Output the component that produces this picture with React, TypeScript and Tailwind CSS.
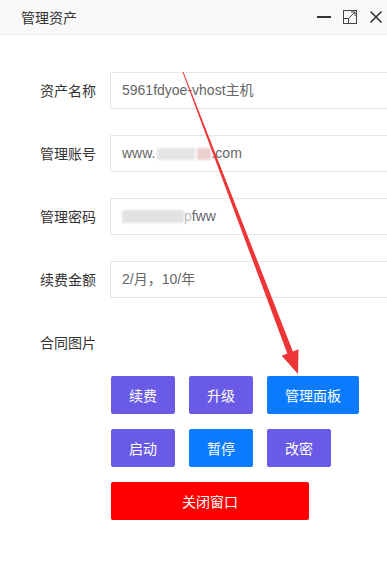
import React from "react"

const font = { fontFamily: '"Noto Sans", "Noto Sans CJK SC", sans-serif' }
const inputFont = { fontFamily: '"Liberation Sans", "Noto Sans CJK SC", sans-serif' }

function Field({ label, children }: { label: string; children: React.ReactNode }) {
  return (
    <div className="flex items-center">
      <div className="w-[110px] shrink-0 pl-[40px] text-[14px] text-[#333]">{label}</div>
      <div
        className="flex h-[37px] w-[290px] shrink-0 items-center border border-[#e6e6e6] bg-white pl-[11px] text-[14px] text-[#666]"
        style={inputFont}
      >
        {children}
      </div>
    </div>
  )
}

function Btn({ label, color, w = "w-[64px]" }: { label: string; color: string; w?: string }) {
  return (
    <button className={`flex h-[38px] ${w} items-center justify-center rounded-[2px] text-[14px] text-white ${color}`}>
      {label}
    </button>
  )
}

export default function App() {
  return (
    <div className="relative h-[583px] w-[387px] overflow-hidden bg-white" style={font}>
      <div className="flex h-[35px] items-center justify-between border-b border-[#eee] bg-[#f8f8f8] pl-[21px] pr-[4px]">
        <span className="text-[14px] text-[#333]">管理资产</span>
        <div className="flex items-center gap-[12px]">
          <svg width="14" height="14" viewBox="0 0 14 14">
            <rect x="0" y="6" width="14" height="2" fill="#333" />
          </svg>
          <svg width="14" height="14" viewBox="0 0 14 14" fill="none" stroke="#444" strokeWidth="1">
            <rect x="0.5" y="0.5" width="13" height="13" />
            <rect x="0.5" y="8.5" width="5" height="5" />
            <path d="M6 8 L12 2 M8 2 H12 V6" />
          </svg>
          <svg width="14" height="14" viewBox="0 0 14 14" fill="none" stroke="#333" strokeWidth="1.6">
            <path d="M1.5 1.5 L12.5 12.5 M12.5 1.5 L1.5 12.5" />
          </svg>
        </div>
      </div>

      <div className="mt-[37px] flex flex-col gap-[26px]">
        <Field label="资产名称">5961fdyoe-vhost主机</Field>
        <Field label="管理账号">
          <span>www.</span>
          <span className="mx-[2px] h-[12px] w-[38px] bg-[#e4e4e4] blur-[1px]" />
          <span className="h-[12px] w-[14px] bg-[#ecd0d0] blur-[1px]" />
          <span>.com</span>
        </Field>
        <Field label="管理密码">
          <span className="h-[13px] w-[62px] bg-[#e2e2e2] blur-[1px]" />
          <span className="text-[#bbb]">p</span>
          <span>fww</span>
        </Field>
        <Field label="续费金额">2/月，10/年</Field>
      </div>

      <div className="mt-[34px] pl-[40px] text-[14px] text-[#333]">合同图片</div>

      <div className="mt-[23px] flex flex-col gap-[15px] pl-[111px]">
        <div className="flex gap-[14px]">
          <Btn label="续费" color="bg-[#6a5be6]" />
          <Btn label="升级" color="bg-[#6a5be6]" />
          <Btn label="管理面板" color="bg-[#0a7bff]" w="w-[92px]" />
        </div>
        <div className="flex gap-[14px]">
          <Btn label="启动" color="bg-[#6a5be6]" />
          <Btn label="暂停" color="bg-[#0a7bff]" />
          <Btn label="改密" color="bg-[#6a5be6]" />
        </div>
        <div className="flex">
          <Btn label="关闭窗口" color="bg-[#ff0000]" w="w-[198px]" />
        </div>
      </div>

      {/* annotation arrow drawn over the form */}
      <svg className="pointer-events-none absolute left-0 top-0" width="387" height="583" viewBox="0 0 387 583">
        <polygon
          points="183.4,71.8 292.9,351.4 298.5,349.3 298,374 281.7,355.7 287.3,353.6 182.6,72.2"
          fill="#ee3535"
        />
      </svg>
    </div>
  )
}
